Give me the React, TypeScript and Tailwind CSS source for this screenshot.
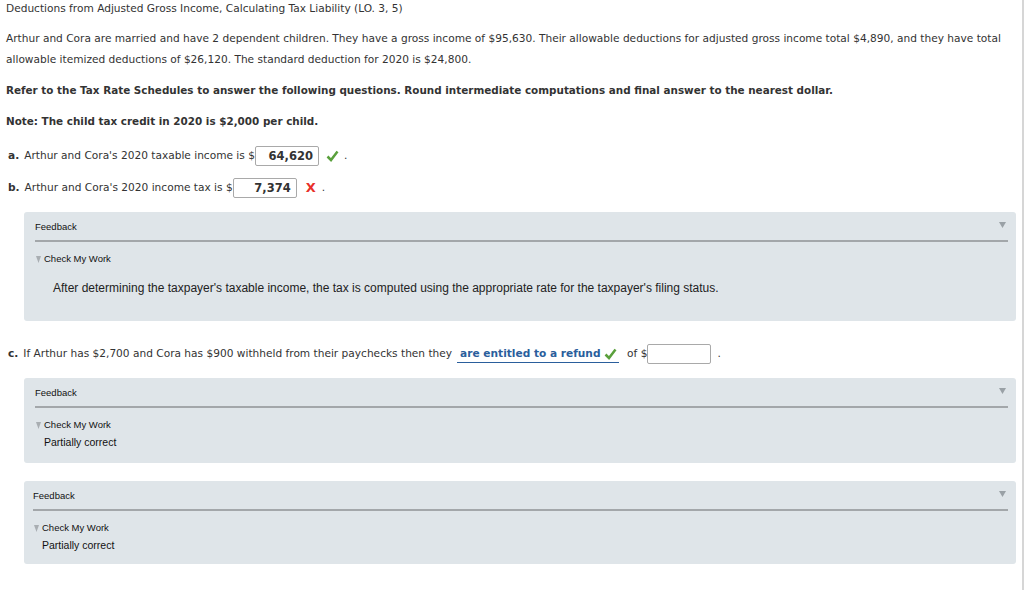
import React from 'react';

const Check = () => (
  <svg width="13" height="12" viewBox="0 0 13 12" className="inline-block">
    <path d="M1.5 6.5 L5 10 L11.5 1.5" fill="none" stroke="#5aa03c" strokeWidth="2.5" />
  </svg>
);

const Answer = ({ value, width }: { value: string; width: string }) => (
  <span
    className={`inline-block ${width} h-[20px] border border-[#a9a9a9] rounded-[2px] text-right pr-[5px] font-bold text-[11.5px] leading-[18px] align-middle`}
  >
    {value}
  </span>
);

const Feedback = ({
  children,
  inset = false,
  pb = 'pb-[14px]',
}: {
  children: React.ReactNode;
  inset?: boolean;
  pb?: string;
}) => (
  <div className="ml-[18px] mr-[6px] bg-[#dfe5e9] rounded-[3px] font-['Liberation_Sans'] text-[#111]">
    <div className={`flex justify-between ${inset ? 'pl-[9px]' : 'pl-[11px]'} pr-[10px] pt-[7px]`}>
      <span className="text-[9.5px] leading-[12px] pt-[2px]">Feedback</span>
      <svg width="7" height="6" viewBox="0 0 7 6" className="mt-[3px]">
        <polygon points="0,0 7,0 3.5,6" fill="#9aa1a6" />
      </svg>
    </div>
    <div className={`${inset ? 'ml-[9px]' : 'ml-[11px]'} mr-[8px] mt-[7px] h-[2px] bg-[#a3a7aa]`} />
    <div className={`${inset ? 'pl-[9px]' : 'pl-[11px]'} pt-[11px] ${pb}`}>
      <div className="text-[9.5px] leading-[12px] flex items-center">
        <svg width="5" height="7" viewBox="0 0 5 7" className="mr-[3px] ml-[1px]">
          <polygon points="0,0 5,0 2.5,7" fill="#a9aeb2" />
        </svg>
        Check My Work
      </div>
      {children}
    </div>
  </div>
);

export default function App() {
  return (
    <div className="min-h-[590px] bg-white font-['DejaVu_Sans'] text-[10.6px] text-[#333] border-r-[2px] border-[#d6d6d6] pl-[6px]">
      <div className="pt-[1px] leading-[14px]">
        Deductions from Adjusted Gross Income, Calculating Tax Liability (LO. 3, 5)
      </div>

      <p className="mt-[13px] leading-[21px]">
        Arthur and Cora are married and have 2 dependent children. They have a gross income of $95,630. Their allowable
        deductions for adjusted gross income total $4,890, and they have total allowable itemized deductions of $26,120.
        The standard deduction for 2020 is $24,800.
      </p>

      <p className="mt-[13px] font-bold text-[10.4px] leading-[14px]">
        Refer to the Tax Rate Schedules to answer the following questions. Round intermediate computations and final answer
        to the nearest dollar.
      </p>

      <p className="mt-[17px] font-bold text-[10.4px] leading-[14px]">
        Note: The child tax credit in 2020 is $2,000 per child.
      </p>

      <div className="mt-[18px] ml-[2px] flex items-center h-[20px]">
        <span className="font-bold mr-[5px]">a.</span>
        <span>Arthur and Cora's 2020 taxable income is $</span>
        <Answer value="64,620" width="w-[64px]" />
        <span className="ml-[7px]"><Check /></span>
        <span className="ml-[5px]">.</span>
      </div>

      <div className="mt-[12px] ml-[2px] flex items-center h-[20px]">
        <span className="font-bold mr-[5px]">b.</span>
        <span>Arthur and Cora's 2020 income tax is $</span>
        <Answer value="7,374" width="w-[64px]" />
        <span className="ml-[9px] font-bold text-[13px] text-[#e8302a] leading-[14px]">X</span>
        <span className="ml-[6px]">.</span>
      </div>

      <div className="mt-[14px]">
        <Feedback pb="pb-[26px]">
          <p className="mt-[16px] ml-[18px] text-[12px] leading-[14px] text-[#222]">
            After determining the taxpayer's taxable income, the tax is computed using the appropriate rate for the
            taxpayer's filing status.
          </p>
        </Feedback>
      </div>

      <div className="mt-[23px] ml-[2px] flex items-center h-[20px]">
        <span className="font-bold mr-[5px]">c.</span>
        <span>If Arthur has $2,700 and Cora has $900 withheld from their paychecks then they</span>
        <span className="ml-[5px] w-[162px] border-b border-[#2a5e9c] flex items-center pb-[1px] mt-[1px]">
          <span className="font-bold text-[#2a5e9c] ml-[3px]">are entitled to a refund</span>
          <span className="ml-[4px]"><Check /></span>
        </span>
        <span className="ml-[8px]">of $</span>
        <span className="inline-block w-[64px] h-[20px] border border-[#a9a9a9] rounded-[2px]" />
        <span className="ml-[6px]">.</span>
      </div>

      <div className="mt-[14px]">
        <Feedback pb="pb-[14px]">
          <p className="mt-[4px] ml-[9px] text-[10.5px] leading-[14px] text-[#111]">Partially correct</p>
        </Feedback>
      </div>

      <div className="mt-[18px]">
        <Feedback inset pb="pb-[12px]">
          <p className="mt-[4px] ml-[9px] text-[10.5px] leading-[14px] text-[#111]">Partially correct</p>
        </Feedback>
      </div>
    </div>
  );
}
